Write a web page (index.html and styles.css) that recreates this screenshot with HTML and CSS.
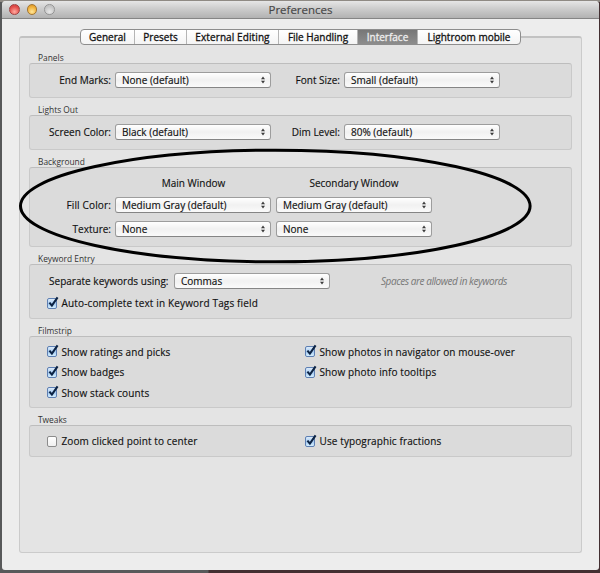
FILE: index.html
```
<!DOCTYPE html>
<html lang="en">
<head>
<meta charset="utf-8">
<title>Preferences</title>
<link rel="stylesheet" href="styles.css">
</head>
<body>
<svg class="defs" width="0" height="0" aria-hidden="true">
  <symbol id="arrows" viewBox="0 0 6 8"><path d="M3 .6 5 3.2H1zM3 7.4 5 4.8H1z" fill="#3c3c3c"/></symbol>
  <symbol id="check" viewBox="0 0 12 13"><path d="M2.4 6.6 4.9 9.6 10.6 1.4" fill="none" stroke="#0c2344" stroke-width="2.1"/></symbol>
</svg>
<div class="window">
  <header class="titlebar">
    <div class="lights"><i class="light red"></i><i class="light yellow"></i><i class="light gray"></i></div>
    <h1>Preferences</h1>
  </header>
  <nav class="tabs">
    <span class="tab t1">General</span><span class="tab t2">Presets</span><span class="tab t3">External Editing</span><span class="tab t4">File Handling</span><span class="tab t5 active">Interface</span><span class="tab t6">Lightroom mobile</span>
  </nav>
  <main class="panel">
    <section class="group">
      <h2>Panels</h2>
      <div class="box pair">
        <label>End Marks:</label><div class="select"><span>None (default)</span><svg><use href="#arrows"/></svg></div>
        <label>Font Size:</label><div class="select"><span>Small (default)</span><svg><use href="#arrows"/></svg></div>
      </div>
    </section>
    <section class="group">
      <h2>Lights Out</h2>
      <div class="box pair">
        <label>Screen Color:</label><div class="select"><span>Black (default)</span><svg><use href="#arrows"/></svg></div>
        <label>Dim Level:</label><div class="select"><span>80% (default)</span><svg><use href="#arrows"/></svg></div>
      </div>
    </section>
    <section class="group">
      <h2>Background</h2>
      <div class="box background">
        <b></b><div class="head">Main Window</div><div class="head">Secondary Window</div>
        <label class="fill">Fill Color:</label><div class="select"><span>Medium Gray (default)</span><svg><use href="#arrows"/></svg></div><div class="select"><span>Medium Gray (default)</span><svg><use href="#arrows"/></svg></div>
        <label>Texture:</label><div class="select"><span>None</span><svg><use href="#arrows"/></svg></div><div class="select"><span>None</span><svg><use href="#arrows"/></svg></div>
      </div>
    </section>
    <section class="group">
      <h2>Keyword Entry</h2>
      <div class="box keyword">
        <div class="line"><label>Separate keywords using:</label><div class="select"><span>Commas</span><svg><use href="#arrows"/></svg></div><em>Spaces are allowed in keywords</em></div>
        <div class="option"><i class="cb on"><svg><use href="#check"/></svg></i><span>Auto-complete text in Keyword Tags field</span></div>
      </div>
    </section>
    <section class="group">
      <h2>Filmstrip</h2>
      <div class="box options film">
        <div class="option"><i class="cb on"><svg><use href="#check"/></svg></i><span>Show ratings and picks</span></div>
        <div class="option"><i class="cb on"><svg><use href="#check"/></svg></i><span>Show photos in navigator on mouse-over</span></div>
        <div class="option"><i class="cb on"><svg><use href="#check"/></svg></i><span>Show badges</span></div>
        <div class="option"><i class="cb on"><svg><use href="#check"/></svg></i><span>Show photo info tooltips</span></div>
        <div class="option"><i class="cb on"><svg><use href="#check"/></svg></i><span>Show stack counts</span></div>
      </div>
    </section>
    <section class="group">
      <h2>Tweaks</h2>
      <div class="box options tweaks">
        <div class="option"><i class="cb"></i><span>Zoom clicked point to center</span></div>
        <div class="option"><i class="cb on"><svg><use href="#check"/></svg></i><span>Use typographic fractions</span></div>
      </div>
    </section>
  </main>
</div>
<svg class="marker" viewBox="0 0 516 118"><ellipse cx="257.3" cy="58" rx="254.8" ry="55.8" fill="none" stroke="#000" stroke-width="3"/></svg>
</body>
</html>
```

FILE: styles.css
```
* { box-sizing: border-box; }
body {
  margin: 0;
  width: 600px;
  height: 573px;
  padding: 1px 1px 3px 2px;
  overflow: hidden;
  position: relative;
  background:
    linear-gradient(#8f8a84, #8f8a84) 0 0 / 100% 2px no-repeat,
    linear-gradient(90deg, #58595a 0 208px, #432f31 209px);
  font: 10px/14px "Open Sans", "Noto Sans", sans-serif;
  color: #111;
  -webkit-text-stroke: .15px;
}
.defs { position: absolute; }
.window {
  height: 569px;
  border-radius: 4px 4px 3px 3px;
  background: #ededed;
  overflow: hidden;
}
.titlebar {
  height: 18px;
  display: grid;
  grid-template-columns: 60px 1fr 60px;
  align-items: center;
  background: linear-gradient(#e6e6e6, #cfcfcf 40%, #b2b2b2);
  border-bottom: 1px solid #858585;
}
.lights { display: flex; gap: 7px; padding-left: 7px; }
.light {
  width: 10.5px;
  height: 10.5px;
  border-radius: 50%;
  border: 1px solid #8b8b8b;
}
.red { background: radial-gradient(circle at 50% 75%, #ffaaa0, #e4504c 60%, #c93c3a); border-color: #a04545; }
.yellow { background: radial-gradient(circle at 50% 75%, #ffe69a, #f0b13b 60%, #d38e25); border-color: #a47632; }
.gray { background: radial-gradient(circle at 50% 75%, #e8e8e8, #c2c2c2 70%); border-color: #969696; }
h1 {
  margin: 0;
  text-align: center;
  font-size: 11.5px;
  font-weight: 400;
  line-height: 16px;
  color: #464646;
}
.tabs {
  position: relative;
  width: 441px;
  height: 16px;
  margin: 10px 0 0 78px;
  display: flex;
  border: 1px solid #8d8d8d;
  border-radius: 4px;
  background: linear-gradient(#fff, #f4f4f4);
  overflow: hidden;
}
.tab {
  border-right: 1px solid #b5b5b5;
  text-align: center;
  line-height: 14px;
  color: #111;
  -webkit-text-stroke: .3px;
}
.t1 { width: 54px; }
.t2 { width: 52px; }
.t3 { width: 92px; letter-spacing: .1px; }
.t4 { width: 79px; }
.t5 { width: 60px; }
.t6 { flex: 1; border: 0; }
.active { background: linear-gradient(#777, #8d8d8d); color: #eee; }
.panel {
  width: 563px;
  height: 517px;
  margin: -9px 0 0 17px;
  padding: 8px 9px 0;
  border: 1px solid #cbcbcb;
  border-top: 2px solid #c2c2c2;
  border-radius: 3px;
  background: #e4e4e4;
}
h2 {
  margin: 0;
  height: 17px;
  padding: 6px 0 0 9px;
  font-size: 8.4px;
  line-height: 11px;
  font-weight: 400;
  color: #333;
  -webkit-text-stroke: 0;
}
.box {
  width: 543px;
  border: 1px solid #c9c9c9;
  border-top-color: #bdbdbd;
  border-radius: 3px;
  background: #dbdbdb;
}
.pair {
  height: 35px;
  padding-top: 8px;
  display: grid;
  grid-template-columns: 81px 156px 65px 156px;
  column-gap: 4px;
  align-items: center;
  align-content: start;
}
label { text-align: right; white-space: nowrap; }
.fill { letter-spacing: .15px; }
.select {
  height: 16px;
  width: 156px;
  padding: 0 4px 0 6px;
  display: flex;
  align-items: center;
  justify-content: space-between;
  border: 1px solid #9d9d9d;
  border-bottom-color: #858585;
  border-radius: 3px;
  background: linear-gradient(#fff, #f1f1f1 50%, #fafafa);
  line-height: 14px;
  white-space: nowrap;
}
.select svg { width: 6px; height: 8px; }
.background {
  height: 80px;
  display: grid;
  grid-template-columns: 81px 157px 156px;
  grid-template-rows: 21px 16px 16px;
  column-gap: 4px;
  row-gap: 8px;
  align-content: start;
  align-items: center;
}
.head { text-align: center; padding-top: 9px; }
.keyword { height: 55px; padding: 8px 0 0 16px; }
.line { display: flex; align-items: center; }
.line label { width: 125px; text-align: left; margin-left: 3px; letter-spacing: .02px; }
.line em { margin-left: 51px; color: #777; letter-spacing: -.44px; -webkit-text-stroke: 0; }
.keyword .option { margin-top: 7px; letter-spacing: .15px; }
.option { display: flex; align-items: center; height: 14px; white-space: nowrap; letter-spacing: .11px; }
.cb {
  flex: none;
  position: relative;
  width: 10px;
  height: 11px;
  margin: 0 4.5px 0 1px;
  border: 1px solid #8c8c8c;
  border-radius: 2px;
  background: linear-gradient(#fff, #f0f0f0);
}
.cb.on { border-color: #5d7fb3; background: linear-gradient(#dcebfa, #a6cbf1 55%, #d5efff); }
.cb svg { position: absolute; left: -1px; top: -3px; width: 12px; height: 13px; }
.options { padding-left: 16px; display: grid; grid-template-columns: 258px 1fr; align-content: start; }
.film { height: 72px; padding-top: 7.5px; row-gap: 6.5px; }
.tweaks { height: 32px; padding-top: 8px; }
.marker {
  position: absolute;
  left: 18px;
  top: 148px;
  width: 516px;
  height: 118px;
}
```
